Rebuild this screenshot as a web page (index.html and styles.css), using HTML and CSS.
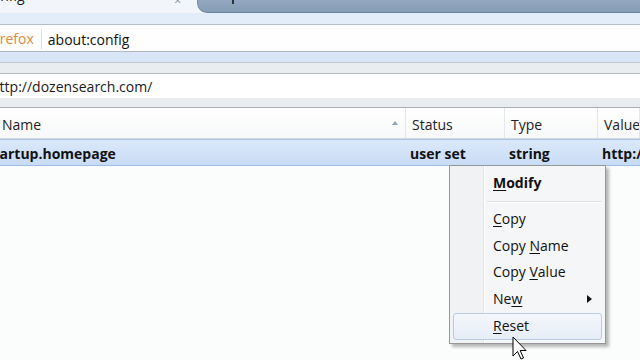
FILE: index.html
```html
<html>

<head>
    <title>about:config</title>

    <link rel="stylesheet" href="styles.css">
</head>

<body>
    <div class="tabbar">
        <div class="tab-active">
            <span class="tab-title">about:config</span>
            <span class="tab-close">&times;</span>
        </div>
        <div class="tab-inactive"><span class="tab-mark"></span></div>
    </div>
    <div class="toolbar-strip"></div>

    <div class="urlbar">
        <span class="identity">Firefox</span>
        <span class="url">about:config</span>
    </div>
    <div class="bookmarks-strip"></div>

    <div class="config-page">
        <div class="filter">
            <span class="filter-text">http://dozensearch.com/</span>
        </div>

        <div class="tree">
            <div class="tree-row tree-head">
                <div class="cell cell-name">Name <span class="sort-arrow"></span></div>
                <div class="cell">Status</div>
                <div class="cell">Type</div>
                <div class="cell">Value</div>
            </div>
            <div class="tree-row tree-selected">
                <div class="cell cell-name"><span class="pref-name">browser.startup.homepage</span></div>
                <div class="cell">user set</div>
                <div class="cell">string</div>
                <div class="cell">http://dozensearch.com/</div>
            </div>
        </div>
    </div>

    <!-- context menu on the selected pref -->
    <div class="context-menu">
        <div class="menu-item menu-default"><u>M</u>odify</div>
        <div class="menu-separator"></div>
        <div class="menu-item"><u>C</u>opy</div>
        <div class="menu-item">Copy <u>N</u>ame</div>
        <div class="menu-item">Copy <u>V</u>alue</div>
        <div class="menu-item menu-sub">Ne<u>w</u> <span class="submenu-arrow"></span></div>
        <div class="menu-item menu-hover"><u>R</u>eset</div>
    </div>

    <svg class="cursor" width="16" height="26" viewBox="0 0 16 26">
        <path d="M1 1 L1 20 L5.5 15.5 L9 23 L11.5 22 L8.2 14.5 L14 14.5 Z" fill="#ffffff" stroke="#000000" stroke-width="1" stroke-linejoin="round" />
    </svg>
</body>

</html>
```

FILE: styles.css
```css
body {
    margin: 0;
    width: 640px;
    height: 360px;
    overflow: hidden;
    position: relative;
    background-color: #fbfcfc;
    font-family: "Open Sans", "Noto Sans", sans-serif;
    font-size: 14px;
    color: #1a1a1a;
}

/* tabs */
.tabbar {
    display: flex;
    height: 13px;
    overflow: hidden;
    background-color: #f2f6fb;
}

.tab-active {
    width: 197px;
    position: relative;
    overflow: hidden;
}

.tab-title {
    display: block;
    margin-left: -57px;
    margin-top: -11px;
    line-height: 14px;
    white-space: nowrap;
}

.tab-close {
    position: absolute;
    left: 174px;
    top: -9px;
    color: #8a8f96;
    font-size: 13px;
}

.tab-inactive {
    flex: 1;
    background: linear-gradient(#93a8c0, #879db6);
    border-bottom: 1px solid #6f8299;
    border-left: 1px solid #7a8ea6;
    border-bottom-left-radius: 10px;
    position: relative;
}

.tab-mark {
    position: absolute;
    left: 34px;
    top: 0;
    width: 2px;
    height: 4px;
    background-color: #2b3340;
}

.toolbar-strip {
    height: 11px;
    background-color: #e3edf9;
    border-bottom: 1px solid #b7bec8;
}

/* location bar */
.urlbar {
    height: 27px;
    display: flex;
    align-items: center;
    background-color: #fdfefd;
    border-bottom: 1px solid #b3b9c1;
    white-space: nowrap;
    padding-top: 2px;
    box-sizing: border-box;
}

.identity {
    color: #e3893a;
    margin-left: -11px;
    padding-right: 7px;
    border-right: 1px solid #ead9c8;
    line-height: 20px;
}

.url {
    margin-left: 6px;
    color: #111111;
}

.bookmarks-strip {
    height: 10px;
    background-color: #d9e6f8;
    border-bottom: 1px solid #c3c9d0;
}

/* about:config page */
.config-page {
    background-color: #eaedf0;
    padding-top: 10px;
}

.filter {
    height: 24px;
    background-color: #ffffff;
    border-top: 1px solid #b9bec5;
    display: flex;
    align-items: center;
    overflow: hidden;
    white-space: nowrap;
}

.filter-text {
    margin-left: -9px;
}

.tree {
    margin-top: 9px;
    border-top: 1px solid #a9afb6;
    background-color: #fbfcfc;
    height: 260px;
}

.tree-row {
    display: grid;
    grid-template-columns: 406px 99px 93px 1fr;
    white-space: nowrap;
    overflow: hidden;
}

.tree-head {
    height: 30px;
    background: linear-gradient(#ffffff, #f7f8f9);
    border-bottom: 1px solid #d5d9de;
    color: #222222;
}

.tree-head .cell {
    border-right: 1px solid #e3e6ea;
    padding-left: 6px;
    padding-top: 3px;
}

.tree-head .cell-name {
    padding-left: 2px;
    position: relative;
}

.cell {
    display: flex;
    align-items: center;
    overflow: hidden;
    padding-left: 5px;
}

.sort-arrow {
    position: absolute;
    right: 7px;
    top: 13px;
    width: 0;
    height: 0;
    border-left: 3px solid transparent;
    border-right: 3px solid transparent;
    border-bottom: 4px solid #8fa3b8;
}

.tree-selected {
    height: 25px;
    background: linear-gradient(#dbe8fa, #c9dcf6);
    border-top: 1px solid #a9c5ea;
    border-bottom: 1px solid #9fbde6;
    font-weight: bold;
    color: #111111;
}

.tree-selected .cell {
    padding-left: 4px;
    padding-top: 2px;
}

.tree-selected .cell-name {
    padding-left: 0;
}

.pref-name {
    margin-left: -75px;
}

/* context menu */
.context-menu {
    position: absolute;
    left: 449px;
    top: 165px;
    width: 149px;
    padding: 4px 3px 3px 3px;
    background: linear-gradient(to right, #f1f2f3 33px, #e2e3e3 33px, #e2e3e3 34px, #ffffff 34px, #ffffff 35px, #f5f6f7 35px);
    border: 1px solid #979797;
    box-shadow: 3px 3px 3px rgba(0, 0, 0, 0.28);
    color: #111111;
}

.menu-item {
    height: 26.75px;
    line-height: 26.75px;
    padding-left: 40px;
    position: relative;
    box-sizing: border-box;
}

.menu-item u {
    text-underline-offset: 2px;
}

.menu-default {
    font-weight: bold;
}

.menu-separator {
    height: 9px;
    margin-left: 34px;
    background: linear-gradient(transparent 4px, #e0e0e0 4px, #e0e0e0 5px, #ffffff 5px, #ffffff 6px, transparent 6px);
}

.submenu-arrow {
    position: absolute;
    left: 134px;
    top: 9px;
    width: 0;
    height: 0;
    border-top: 4px solid transparent;
    border-bottom: 4px solid transparent;
    border-left: 5px solid #111111;
}

.menu-hover {
    background: linear-gradient(#f4f7fb, #e6edf6);
    border: 1px solid #b9cbe2;
    border-radius: 3px;
    line-height: 24.75px;
    padding-left: 39px;
}

.cursor {
    position: absolute;
    left: 512px;
    top: 336px;
}
```
